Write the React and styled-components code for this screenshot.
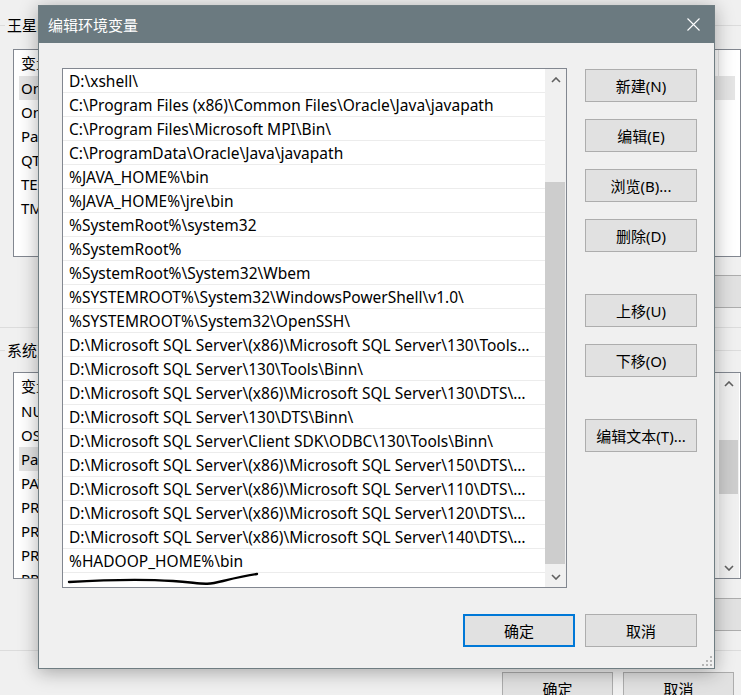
import React from "react";
import styled, { createGlobalStyle } from "styled-components";

const GlobalStyle = createGlobalStyle`
  html, body {
    margin: 0;
    padding: 0;
  }
  body {
    background: #f0f0f0;
    font-family: "Noto Sans", "Noto Sans CJK SC", sans-serif;
    font-size: 15px;
    color: #000;
  }
`;

const pathItems = [
  "D:\\xshell\\",
  "C:\\Program Files (x86)\\Common Files\\Oracle\\Java\\javapath",
  "C:\\Program Files\\Microsoft MPI\\Bin\\",
  "C:\\ProgramData\\Oracle\\Java\\javapath",
  "%JAVA_HOME%\\bin",
  "%JAVA_HOME%\\jre\\bin",
  "%SystemRoot%\\system32",
  "%SystemRoot%",
  "%SystemRoot%\\System32\\Wbem",
  "%SYSTEMROOT%\\System32\\WindowsPowerShell\\v1.0\\",
  "%SYSTEMROOT%\\System32\\OpenSSH\\",
  "D:\\Microsoft SQL Server\\(x86)\\Microsoft SQL Server\\130\\Tools\\Binn\\",
  "D:\\Microsoft SQL Server\\130\\Tools\\Binn\\",
  "D:\\Microsoft SQL Server\\(x86)\\Microsoft SQL Server\\130\\DTS\\Binn\\",
  "D:\\Microsoft SQL Server\\130\\DTS\\Binn\\",
  "D:\\Microsoft SQL Server\\Client SDK\\ODBC\\130\\Tools\\Binn\\",
  "D:\\Microsoft SQL Server\\(x86)\\Microsoft SQL Server\\150\\DTS\\Binn\\",
  "D:\\Microsoft SQL Server\\(x86)\\Microsoft SQL Server\\110\\DTS\\Binn\\",
  "D:\\Microsoft SQL Server\\(x86)\\Microsoft SQL Server\\120\\DTS\\Binn\\",
  "D:\\Microsoft SQL Server\\(x86)\\Microsoft SQL Server\\140\\DTS\\Binn\\",
  "%HADOOP_HOME%\\bin",
];

const userVars = ["OneDrive", "OneDriveConsumer", "Path", "QT_DEVICE_PIXEL_RATIO", "TEMP", "TMP"];
const systemVars = [
  "NUMBER_OF_PROCESSORS",
  "OS",
  "Path",
  "PATHEXT",
  "PROCESSOR_ARCHITECTURE",
  "PROCESSOR_IDENTIFIER",
  "PROCESSOR_LEVEL",
  "PROCESSOR_REVISION",
];

const sideButtons = [
  { label: "新建(N)", gap: 0 },
  { label: "编辑(E)", gap: 17 },
  { label: "浏览(B)...", gap: 17 },
  { label: "删除(D)", gap: 17 },
  { label: "上移(U)", gap: 42 },
  { label: "下移(O)", gap: 17 },
  { label: "编辑文本(T)...", gap: 42 },
];

const Desktop = styled.div`
  position: relative;
  width: 741px;
  height: 695px;
  overflow: hidden;
`;

/* the environment variables window behind the dialog */
const BackWindow = styled.div`
  width: 860px;
  margin-left: -6px;
  padding-top: 16px;
`;

const Group = styled.fieldset`
  margin: ${(p) => p.$top}px 0 0;
  padding: 0 0 19px 10px;
  border: 1px solid #dcdcdc;
  min-inline-size: 0;
`;

const Legend = styled.legend`
  padding: 0 2px;
  line-height: 18px;
`;

const BackList = styled.div`
  margin: ${(p) => p.$top}px 0 0 8px;
  width: 728px;
  height: ${(p) => p.$h}px;
  box-sizing: border-box;
  border: 1px solid #828790;
  background: #fff;
  display: flex;
  overflow: hidden;
`;

const BackRows = styled.div`
  flex: 1;
  padding: 0 5px;
`;

const HeaderRow = styled.div`
  height: 26px;
  line-height: 26px;
  padding-left: 2px;
  display: flex;
`;

const HeaderCell = styled.span`
  width: ${(p) => p.$w}px;
  box-sizing: border-box;
  border-right: ${(p) => (p.$divider ? "1px solid #e5e5e5" : "none")};
`;

const BackRow = styled.div`
  height: 24px;
  line-height: 24px;
  padding-left: 2px;
  white-space: nowrap;
  background: ${(p) => (p.$selected ? "#e5e5e5" : "transparent")};
`;

const BackScroll = styled.div`
  width: 20px;
  margin-right: 1px;
  background: #f0f0f0;
  display: flex;
  flex-direction: column;
`;

const ButtonRow = styled.div`
  display: flex;
  justify-content: flex-end;
  gap: ${(p) => p.$gap || 11}px;
  margin-top: ${(p) => p.$top}px;
  padding-right: ${(p) => p.$right || 0}px;
`;

const Button = styled.div`
  width: ${(p) => p.$w || 112}px;
  height: 33px;
  box-sizing: border-box;
  margin-top: ${(p) => p.$gap || 0}px;
  border: ${(p) => (p.$default ? "2px solid #0078d7" : "1px solid #adadad")};
  background: #e1e1e1;
  display: flex;
  align-items: center;
  justify-content: center;
  white-space: nowrap;
`;

/* the dialog */
const Dialog = styled.div`
  position: absolute;
  left: 38px;
  top: 5px;
  width: 677px;
  height: 664px;
  box-sizing: border-box;
  border: 1px solid #6f7d82;
  background: #f0f0f0;
  box-shadow: 0 3px 18px rgba(0, 0, 0, 0.32);
  display: flex;
  flex-direction: column;
`;

const TitleBar = styled.div`
  height: 37px;
  flex-shrink: 0;
  background: #6b7a80;
  color: #fff;
  display: flex;
  align-items: center;
  justify-content: space-between;
  padding: 0 14px 0 9px;
`;

const Body = styled.div`
  display: flex;
  gap: 18px;
  padding: 25px 17px 0 23px;
`;

const PathList = styled.div`
  position: relative;
  width: 505px;
  height: 520px;
  box-sizing: border-box;
  border: 1px solid #828790;
  background: #fff;
  display: flex;
`;

const PathRows = styled.div`
  flex: 1;
  min-width: 0;
`;

const PathRow = styled.div`
  height: 24px;
  box-sizing: border-box;
  padding: 1px 13px 0 6px;
  line-height: 22px;
  font-size: 15.5px;
  border-bottom: 1px solid #ececec;
  white-space: nowrap;
  overflow: hidden;
  text-overflow: ellipsis;
`;

const ScrollBar = styled.div`
  width: 21px;
  background: #f0f0f0;
  display: flex;
  flex-direction: column;
`;

const Arrow = styled.div`
  height: 21px;
  flex-shrink: 0;
  display: flex;
  align-items: center;
  justify-content: center;
`;

const Thumb = styled.div`
  margin: ${(p) => p.$top}px 1px ${(p) => p.$bottom}px 0;
  height: ${(p) => (p.$h ? `${p.$h}px` : "auto")};
  flex: ${(p) => (p.$h ? "none" : "1")};
  background: #cdcdcd;
`;

const Track = styled.div`
  flex: 1;
  display: flex;
  flex-direction: column;
`;

const Scribble = styled.svg`
  position: absolute;
  left: 0;
  top: 0;
  pointer-events: none;
`;

const SideColumn = styled.div`
  width: 112px;
  margin-top: 1px;
  display: flex;
  flex-direction: column;
`;

const Grip = styled.svg`
  position: absolute;
  right: 1px;
  bottom: 1px;
`;

const Chevron = ({ down }) => (
  <svg width="10" height="6" viewBox="0 0 10 6">
    <polyline
      points={down ? "1,1 5,5 9,1" : "1,5 5,1 9,5"}
      fill="none"
      stroke="#606060"
      strokeWidth="1.6"
    />
  </svg>
);

const CloseIcon = () => (
  <svg width="13" height="13" viewBox="0 0 13 13">
    <path d="M0.5 0.5L12.5 12.5M12.5 0.5L0.5 12.5" stroke="#fff" strokeWidth="1.1" />
  </svg>
);

const App = () => {
  return (
    <>
      <GlobalStyle />
      <Desktop>
        <BackWindow>
          <Group $top={0}>
            <Legend>王星的用户变量(U)</Legend>
            <BackList $top={15} $h={208}>
              <BackRows>
                <HeaderRow>
                  <HeaderCell $w={180}>变量</HeaderCell>
                  <HeaderCell $w={518} $divider>
                    值
                  </HeaderCell>
                </HeaderRow>
                {userVars.map((v, i) => (
                  <BackRow key={v} $selected={i === 0}>
                    {v}
                  </BackRow>
                ))}
              </BackRows>
            </BackList>
            <ButtonRow $top={18} $right={28}>
              <Button>新建(N)...</Button>
              <Button>编辑(E)...</Button>
              <Button>删除(D)</Button>
            </ButtonRow>
          </Group>
          <Group $top={13}>
            <Legend>系统变量(S)</Legend>
            <BackList $top={13} $h={207}>
              <BackRows>
                <HeaderRow>
                  <HeaderCell $w={180}>变量</HeaderCell>
                </HeaderRow>
                {systemVars.map((v) => (
                  <BackRow key={v} $selected={v === "Path"}>
                    {v}
                  </BackRow>
                ))}
              </BackRows>
              <BackScroll>
                <Arrow>
                  <Chevron />
                </Arrow>
                <Track>
                  <Thumb $top={46} $h={54} $bottom={0} />
                </Track>
                <Arrow>
                  <Chevron down />
                </Arrow>
              </BackScroll>
            </BackList>
            <ButtonRow $top={19} $right={28}>
              <Button>新建(W)...</Button>
              <Button>编辑(I)...</Button>
              <Button>删除(L)</Button>
            </ButtonRow>
          </Group>
          <ButtonRow $top={21} $gap={10} $right={120}>
            <Button $w={111}>确定</Button>
            <Button $w={111}>取消</Button>
          </ButtonRow>
        </BackWindow>

        <Dialog>
          <TitleBar>
            <span>编辑环境变量</span>
            <CloseIcon />
          </TitleBar>
          <Body>
            <PathList>
              <PathRows>
                {pathItems.map((item) => (
                  <PathRow key={item}>{item}</PathRow>
                ))}
              </PathRows>
              <ScrollBar>
                <Arrow>
                  <Chevron />
                </Arrow>
                <Track>
                  <Thumb $top={92} $bottom={2} />
                </Track>
                <Arrow>
                  <Chevron down />
                </Arrow>
              </ScrollBar>
              <Scribble width="505" height="520">
                <path
                  d="M6 513 C 40 511, 80 510, 110 512 S 140 517, 160 512 S 185 506, 194 505"
                  fill="none"
                  stroke="#000"
                  strokeWidth="2.4"
                  strokeLinecap="round"
                />
              </Scribble>
            </PathList>
            <SideColumn>
              {sideButtons.map((b) => (
                <Button key={b.label} $gap={b.gap}>
                  {b.label}
                </Button>
              ))}
            </SideColumn>
          </Body>
          <ButtonRow $top={26} $gap={10} $right={17}>
            <Button $default>确定</Button>
            <Button>取消</Button>
          </ButtonRow>
          <Grip width="12" height="12" viewBox="0 0 12 12">
            {[
              [9, 1],
              [9, 5],
              [5, 5],
              [9, 9],
              [5, 9],
              [1, 9],
            ].map(([x, y]) => (
              <rect key={`${x}-${y}`} x={x} y={y} width="2" height="2" fill="#b5b5b5" />
            ))}
          </Grip>
        </Dialog>
      </Desktop>
    </>
  );
};

export default App;
